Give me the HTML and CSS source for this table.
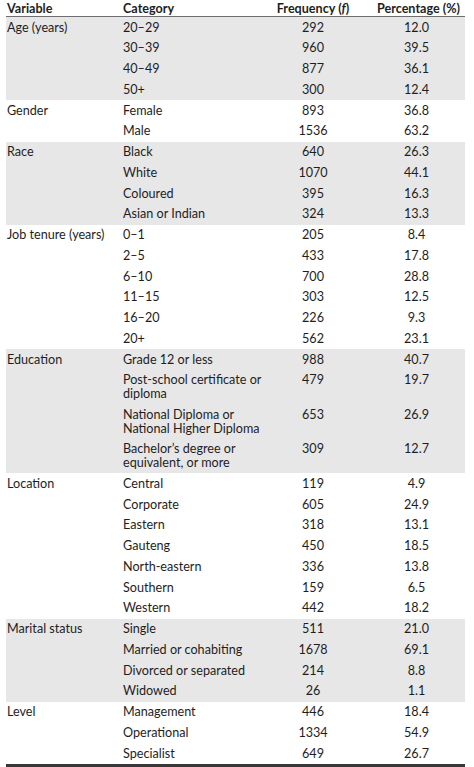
FILE: index.html
```html
<!DOCTYPE html>
<html>
<head>
<meta charset="utf-8">
<link rel="stylesheet" href="styles.css">
</head>
<body>
<table class="tbl">
<colgroup><col class="c1"><col class="c2"><col class="c3"><col class="c4"></colgroup>
<thead>
<tr><th class="var">Variable</th><th class="cat">Category</th><th class="num">Frequency (<i>f</i>)</th><th class="pct">Percentage (%)</th></tr>
</thead>
<tbody class="shade">
<tr><td>Age (years)</td><td>20–29</td><td class="num">292</td><td class="pct">12.0</td></tr>
<tr><td></td><td>30–39</td><td class="num">960</td><td class="pct">39.5</td></tr>
<tr><td></td><td>40–49</td><td class="num">877</td><td class="pct">36.1</td></tr>
<tr><td></td><td>50+</td><td class="num">300</td><td class="pct">12.4</td></tr>
</tbody>
<tbody>
<tr><td>Gender</td><td>Female</td><td class="num">893</td><td class="pct">36.8</td></tr>
<tr><td></td><td>Male</td><td class="num">1536</td><td class="pct">63.2</td></tr>
</tbody>
<tbody class="shade">
<tr><td>Race</td><td>Black</td><td class="num">640</td><td class="pct">26.3</td></tr>
<tr><td></td><td>White</td><td class="num">1070</td><td class="pct">44.1</td></tr>
<tr><td></td><td>Coloured</td><td class="num">395</td><td class="pct">16.3</td></tr>
<tr><td></td><td>Asian or Indian</td><td class="num">324</td><td class="pct">13.3</td></tr>
</tbody>
<tbody>
<tr><td>Job tenure (years)</td><td>0–1</td><td class="num">205</td><td class="pct">8.4</td></tr>
<tr><td></td><td>2–5</td><td class="num">433</td><td class="pct">17.8</td></tr>
<tr><td></td><td>6–10</td><td class="num">700</td><td class="pct">28.8</td></tr>
<tr><td></td><td>11–15</td><td class="num">303</td><td class="pct">12.5</td></tr>
<tr><td></td><td>16–20</td><td class="num">226</td><td class="pct">9.3</td></tr>
<tr><td></td><td>20+</td><td class="num">562</td><td class="pct">23.1</td></tr>
</tbody>
<tbody class="shade">
<tr><td>Education</td><td>Grade 12 or less</td><td class="num">988</td><td class="pct">40.7</td></tr>
<tr><td></td><td>Post-school certificate or<br>diploma</td><td class="num">479</td><td class="pct">19.7</td></tr>
<tr><td></td><td>National Diploma or<br>National Higher Diploma</td><td class="num">653</td><td class="pct">26.9</td></tr>
<tr><td></td><td>Bachelor’s degree or<br>equivalent, or more</td><td class="num">309</td><td class="pct">12.7</td></tr>
</tbody>
<tbody>
<tr><td>Location</td><td>Central</td><td class="num">119</td><td class="pct">4.9</td></tr>
<tr><td></td><td>Corporate</td><td class="num">605</td><td class="pct">24.9</td></tr>
<tr><td></td><td>Eastern</td><td class="num">318</td><td class="pct">13.1</td></tr>
<tr><td></td><td>Gauteng</td><td class="num">450</td><td class="pct">18.5</td></tr>
<tr><td></td><td>North-eastern</td><td class="num">336</td><td class="pct">13.8</td></tr>
<tr><td></td><td>Southern</td><td class="num">159</td><td class="pct">6.5</td></tr>
<tr><td></td><td>Western</td><td class="num">442</td><td class="pct">18.2</td></tr>
</tbody>
<tbody class="shade">
<tr><td>Marital status</td><td>Single</td><td class="num">511</td><td class="pct">21.0</td></tr>
<tr><td></td><td>Married or cohabiting</td><td class="num">1678</td><td class="pct">69.1</td></tr>
<tr><td></td><td>Divorced or separated</td><td class="num">214</td><td class="pct">8.8</td></tr>
<tr><td></td><td>Widowed</td><td class="num">26</td><td class="pct">1.1</td></tr>
</tbody>
<tbody class="last">
<tr><td>Level</td><td>Management</td><td class="num">446</td><td class="pct">18.4</td></tr>
<tr><td></td><td>Operational</td><td class="num">1334</td><td class="pct">54.9</td></tr>
<tr><td></td><td>Specialist</td><td class="num">649</td><td class="pct">26.7</td></tr>
</tbody>
</table>
</body>
</html>
```
FILE: styles.css
```css
html, body {
  margin: 0;
  padding: 0;
  background: #ffffff;
}
body {
  padding: 0 9px 0 6px;
  font-family: "Lato", "Open Sans", sans-serif;
  font-size: 12.6px;
  color: #1e1e1e;
}
.tbl {
  width: 459px;
  border-collapse: collapse;
  table-layout: fixed;
}
.c1 { width: 117px; }
.c2 { width: 143px; }
.c3 { width: 94px; }
.c4 { width: 105px; }
th, td {
  padding: 3.5px 0 3.5px 1px;
  line-height: 13.75px;
  text-align: left;
  vertical-align: top;
  font-weight: normal;
}
th {
  font-weight: bold;
  padding: 2px 0 0.25px 1px;
  border-bottom: 1px solid #6e6e6e;
}
th.cat, td:nth-child(2) { padding-left: 0; }
.num { text-align: center; padding-left: 0; }
.pct { text-align: center; padding-left: 12px; }
td.pct { padding-left: 8px; }
.shade td { background: #e7e7e7; }
.last tr:last-child td { border-bottom: 3px solid #383838; }
```
